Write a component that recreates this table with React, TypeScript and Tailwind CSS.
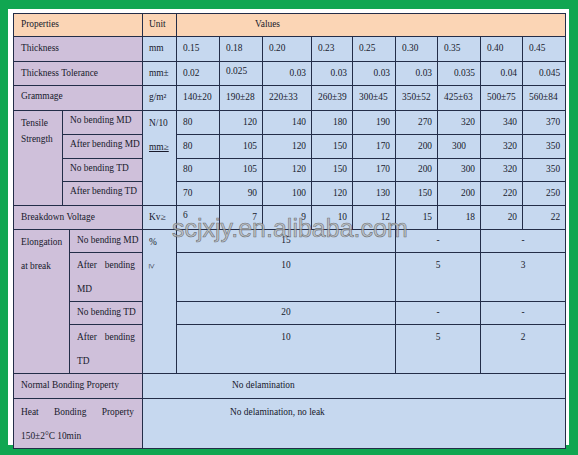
import type { ReactElement, ReactNode } from "react";

type Align = "l" | "r" | "c";

const cell = "border border-[#232d48] p-0 align-middle";
const purple = "bg-[#cfc0da]";
const blue = "bg-[#c6d8ef]";

function Label({
  children,
  colSpan,
  rowSpan,
  className = "",
}: {
  children: ReactNode;
  colSpan?: number;
  rowSpan?: number;
  className?: string;
}): ReactElement {
  return (
    <td colSpan={colSpan} rowSpan={rowSpan} className={`${cell} ${purple} px-[7px] ${className}`}>
      {children}
    </td>
  );
}

function Val({ v, a = "l", className = "" }: { v: string; a?: Align; className?: string }): ReactElement {
  const align = a === "l" ? "text-left pl-[6px]" : a === "r" ? "text-right pr-[5px]" : "text-center";
  return <td className={`${cell} ${blue} ${align} ${className}`}>{v}</td>;
}

function Values({ vals, aligns }: { vals: string[]; aligns: string }): ReactElement {
  return (
    <>
      {vals.map((v, i) => (
        <Val key={i} v={v} a={aligns[i] as Align} />
      ))}
    </>
  );
}

const cols = [49, 7, 73, 34, 43, 43, 49, 41, 43, 42, 43, 42, 43];

export default function App(): ReactElement {
  return (
    <div className="relative h-[455px] w-[578px] bg-[#10a651] pt-[9px] pr-[9px] pb-[10px] pl-[8px]">
      <div className="h-full w-full bg-white pt-[4px] pl-[5px]">
        <table
          className="w-[552px] table-fixed border-collapse border border-[#232d48] text-[9.4px] leading-none text-[#181a2c]"
          style={{ fontFamily: '"Liberation Serif", "Times New Roman", serif' }}
        >
          <colgroup>
            {cols.map((w, i) => (
              <col key={i} style={{ width: w }} />
            ))}
          </colgroup>
          <tbody>
            <tr className="h-[23px] bg-[#fbd5b5]">
              <td colSpan={3} className={`${cell} px-[7px]`}>Properties</td>
              <td className={`${cell} px-[6px]`}>Unit</td>
              <td colSpan={9} className={`${cell} pl-[78px]`}>Values</td>
            </tr>
            <tr className="h-[25px]">
              <Label colSpan={3}>Thickness</Label>
              <Val v="mm" />
              <Values vals={["0.15", "0.18", "0.20", "0.23", "0.25", "0.30", "0.35", "0.40", "0.45"]} aligns="lllllllll" />
            </tr>
            <tr className="h-[24px]">
              <Label colSpan={3}>Thickness Tolerance</Label>
              <Val v="mm±" />
              <Val v="0.02" />
              <Val v="0.025" className="!align-top pt-[5px]" />
              <Values vals={["0.03", "0.03", "0.03", "0.03", "0.035", "0.04", "0.045"]} aligns="rrrrrrr" />
            </tr>
            <tr className="h-[25px]">
              <Label colSpan={3} className="!pb-[2px]">Grammage</Label>
              <Val v="g/m²" />
              <Values
                vals={["140±20", "190±28", "220±33", "260±39", "300±45", "350±52", "425±63", "500±75", "560±84"]}
                aligns="lllllllll"
              />
            </tr>
            <tr className="h-[24px]">
              <Label rowSpan={4} className="!align-top pt-[4px] leading-[16px]">
                Tensile
                <br />
                Strength
              </Label>
              <Label colSpan={2} className="!pb-[3px] whitespace-nowrap">No bending MD</Label>
              <td rowSpan={4} className={`${cell} ${blue} !align-top pl-[6px] leading-[24px]`}>
                N/10
                <br />
                <span className="underline">mm≥</span>
              </td>
              <Values vals={["80", "120", "140", "180", "190", "270", "320", "340", "370"]} aligns="lrrrrrrrr" />
            </tr>
            <tr className="h-[24px]">
              <Label colSpan={2} className="!pb-[3px] whitespace-nowrap">After bending MD</Label>
              <Values vals={["80", "105", "120", "150", "170", "200", "300", "320", "350"]} aligns="lrrrrrcrr" />
            </tr>
            <tr className="h-[23px]">
              <Label colSpan={2} className="!pb-[3px] whitespace-nowrap">No bending TD</Label>
              <Values vals={["80", "105", "120", "150", "170", "200", "300", "320", "350"]} aligns="lrrrrrrrr" />
            </tr>
            <tr className="h-[24px]">
              <Label colSpan={2} className="!pb-[3px] whitespace-nowrap">After bending TD</Label>
              <Values vals={["70", "90", "100", "120", "130", "150", "200", "220", "250"]} aligns="lrrrrrrrr" />
            </tr>
            <tr className="h-[24px]">
              <Label colSpan={3}>Breakdown Voltage</Label>
              <Val v="Kv≥" />
              <Val v="6" className="!align-top pt-[5px]" />
              <Values vals={["7", "9", "10", "12", "15", "18", "20", "22"]} aligns="rrrrrrrr" />
            </tr>
            <tr className="h-[23px]">
              <Label colSpan={2} rowSpan={4} className="!align-top leading-[24px]">
                Elongation
                <br />
                at break
              </Label>
              <Label className="whitespace-nowrap">No bending MD</Label>
              <td rowSpan={4} className={`${cell} ${blue} !align-top pl-[6px] leading-[24px]`}>
                %
                <br />
                <span className="inline-block rotate-90">≥</span>
              </td>
              <td colSpan={5} className={`${cell} ${blue} text-center`}>15</td>
              <td colSpan={2} className={`${cell} ${blue} text-center`}>-</td>
              <td colSpan={2} className={`${cell} ${blue} text-center`}>-</td>
            </tr>
            <tr className="h-[48px]">
              <Label className="!align-top leading-[24px]">
                <span className="flex justify-between">
                  <span>After</span>
                  <span>bending</span>
                </span>
                MD
              </Label>
              <td colSpan={5} className={`${cell} ${blue} !align-top text-center leading-[24px]`}>10</td>
              <td colSpan={2} className={`${cell} ${blue} !align-top text-center leading-[24px]`}>5</td>
              <td colSpan={2} className={`${cell} ${blue} !align-top text-center leading-[24px]`}>3</td>
            </tr>
            <tr className="h-[23px]">
              <Label className="whitespace-nowrap">No bending TD</Label>
              <td colSpan={5} className={`${cell} ${blue} text-center`}>20</td>
              <td colSpan={2} className={`${cell} ${blue} text-center`}>-</td>
              <td colSpan={2} className={`${cell} ${blue} text-center`}>-</td>
            </tr>
            <tr className="h-[47px]">
              <Label className="!align-top leading-[24px]">
                <span className="flex justify-between">
                  <span>After</span>
                  <span>bending</span>
                </span>
                TD
              </Label>
              <td colSpan={5} className={`${cell} ${blue} !align-top text-center leading-[24px]`}>10</td>
              <td colSpan={2} className={`${cell} ${blue} !align-top text-center leading-[24px]`}>5</td>
              <td colSpan={2} className={`${cell} ${blue} !align-top text-center leading-[24px]`}>2</td>
            </tr>
            <tr className="h-[25px]">
              <Label colSpan={3}>Normal Bonding Property</Label>
              <td colSpan={10} className={`${cell} ${blue} pl-[89px]`}>No delamination</td>
            </tr>
            <tr className="h-[47px]">
              <Label colSpan={3} className="!align-top pt-[1px] leading-[24px]">
                <span className="flex justify-between pr-[1px]">
                  <span>Heat</span>
                  <span>Bonding</span>
                  <span>Property</span>
                </span>
                150±2°C 10min
              </Label>
              <td colSpan={10} className={`${cell} ${blue} !align-top pt-[1px] pl-[87px] leading-[24px]`}>
                No delamination, no leak
              </td>
            </tr>
          </tbody>
        </table>
      </div>
      <div
        className="pointer-events-none absolute top-[216px] left-[172px] text-[25px] leading-[25px] text-[#b8b8b8]/75 [-webkit-text-stroke:0.6px_rgba(60,60,60,0.65)]"
        style={{ fontFamily: '"Liberation Sans", Arial, sans-serif' }}
      >
        scjxjy.en.alibaba.com
      </div>
    </div>
  );
}
